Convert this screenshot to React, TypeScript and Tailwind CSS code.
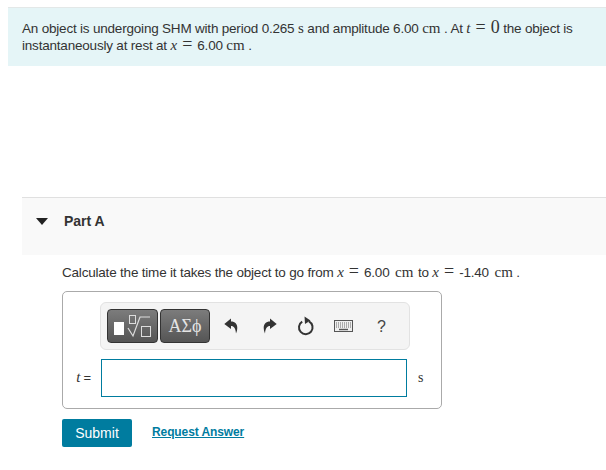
import React from "react";

const MI: React.FC<{ children: React.ReactNode }> = ({ children }) => (
  <span className="font-['Liberation_Serif',serif] italic text-[15px] leading-none tracking-normal">{children}</span>
);

const MR: React.FC<{ children: React.ReactNode }> = ({ children }) => (
  <span className="font-['Liberation_Serif',serif] text-[15px] leading-none tracking-normal">{children}</span>
);

const Eq: React.FC = () => <span className="font-['Liberation_Serif',serif] text-[18px] leading-none tracking-normal mx-[5px]">=</span>;

const UndoIcon: React.FC<{ flip?: boolean }> = ({ flip }) => (
  <svg width="14" height="16" viewBox="0 0 14 16" className={flip ? "-scale-x-100" : ""}>
    <path d="M7 0.5 L0.3 6 L7 11 V8 C10 8 11.5 10 12 15.5 C14.8 9 13 3.5 7 3.5 Z" fill="#333" />
  </svg>
);

const RotateIcon: React.FC = () => (
  <svg width="18" height="20" viewBox="0 0 18 20">
    <path d="M5.2 5.6 A6.8 6.8 0 1 0 12 5.4" fill="none" stroke="#333" strokeWidth="2" />
    <path d="M7.5 0.5 L13.5 4.5 L8 8 Z" fill="#333" />
  </svg>
);

const KeyboardIcon: React.FC = () => (
  <svg width="19" height="12" viewBox="0 0 19 12">
    <rect x="0.5" y="0.5" width="18" height="11" fill="#eee" stroke="#555" />
    <path d="M2 3 H17 M2 5 H17 M2 7 H17" stroke="#666" strokeWidth="1" strokeDasharray="1 1" />
    <path d="M5 9.5 H14" stroke="#555" strokeWidth="1.4" />
  </svg>
);

const App: React.FC = () => {
  return (
    <div className="w-[606px] h-[470px] overflow-hidden bg-white font-['Liberation_Sans',sans-serif] text-[13.5px] tracking-[-0.2px] leading-[17px] text-[#333]">
      <div className="pt-[7px] pl-2">
        <div className="h-[59px] border-t border-[#e3e8e8] bg-[#e5f5f7] pl-[14px] pr-3 pt-[10px]">
          <p className="h-[17px] whitespace-nowrap">
            An object is undergoing SHM with period 0.265 <MR>s</MR> and amplitude 6.00 <MR>cm</MR> . At <MI>t</MI>
            <Eq />
            <span className="font-['Liberation_Serif',serif] text-[18px] leading-none tracking-normal">0</span> the object is
          </p>
          <p className="h-[17px] whitespace-nowrap">
            instantaneously at rest at <MI>x</MI>
            <Eq />
            6.00 <MR>cm</MR> .
          </p>
        </div>
      </div>

      <div className="mt-[131px] ml-[22px] h-[58px] border-t border-[#e0e0e0] bg-[#f9f9f9] flex items-center pb-[10px]">
        <div className="ml-[14px] w-0 h-0 border-l-[6px] border-r-[6px] border-t-[7px] border-l-transparent border-r-transparent border-t-[#222]" />
        <span className="ml-[16px] font-bold text-[14px] tracking-normal">Part A</span>
      </div>

      <div className="ml-[62px] mt-[7px]">
        <p className="h-[17px] whitespace-nowrap">
          Calculate the time it takes the object to go from <MI>x</MI>
          <Eq />
          6.00 <span className="ml-[2px] mr-[1px]"><MR>cm</MR></span> to <MI>x</MI>
          <Eq />
          -1.40 <span className="ml-[2px]"><MR>cm</MR></span> .
        </p>

        <div className="mt-[12px] w-[380px] h-[118px] border border-[#aaa] rounded-[5px] pt-[10px]">
          <div className="ml-[37px] w-[310px] h-[48px] border border-[#e2e2e2] rounded-[6px] bg-[#f4f4f4] flex items-center pl-[6px]">
            <button className="w-[51px] h-[34px] rounded-[4px] border border-[#333] bg-gradient-to-b from-[#7c7c7c] to-[#555] flex items-center justify-center">
              <svg width="49" height="32" viewBox="0 0 49 32">
                <rect x="6" y="12" width="10" height="13" fill="#fff" />
                <rect x="21.5" y="5.5" width="6" height="8" fill="none" stroke="#ddd" />
                <path d="M20 18 L25 26 L32 7 H42" fill="none" stroke="#ddd" strokeWidth="1.2" />
                <rect x="33.5" y="16.5" width="9" height="10" fill="none" stroke="#ddd" />
              </svg>
            </button>
            <button className="ml-[2px] w-[50px] h-[34px] rounded-[4px] border border-[#333] bg-gradient-to-b from-[#7c7c7c] to-[#555] text-[#e4e4e4] font-['Liberation_Serif',serif] text-[18px] tracking-normal leading-none">
              ΑΣϕ
            </button>
            <div className="ml-[14px] flex">
              <UndoIcon />
            </div>
            <div className="ml-[25px] flex">
              <UndoIcon flip />
            </div>
            <div className="ml-[20px] flex">
              <RotateIcon />
            </div>
            <div className="ml-[19px] flex">
              <KeyboardIcon />
            </div>
            <span className="ml-[24px] text-[16px] text-[#444]">?</span>
          </div>

          <div className="mt-[9px] flex items-center">
            <div className="w-[38px] pr-[10px] pb-[3px] text-right text-[13px] tracking-normal">
              <span className="text-[16px]"><MI>t</MI></span>
              <span className="ml-[3px]">=</span>
            </div>
            <input className="w-[306px] h-[38px] border border-[#007c9f] bg-white outline-none" />
            <span className="ml-[11px] pb-[2px] font-['Liberation_Serif',serif] text-[14px]">s</span>
          </div>
        </div>

        <div className="mt-[10px] flex items-center">
          <button className="w-[70px] h-[28px] rounded-[2px] bg-[#007c9f] text-white text-[14px] tracking-normal">Submit</button>
          <a className="ml-[20px] pb-[2px] text-[12px] font-bold tracking-[-0.1px] text-[#007c9f] underline">Request Answer</a>
        </div>
      </div>
    </div>
  );
};

export default App;
